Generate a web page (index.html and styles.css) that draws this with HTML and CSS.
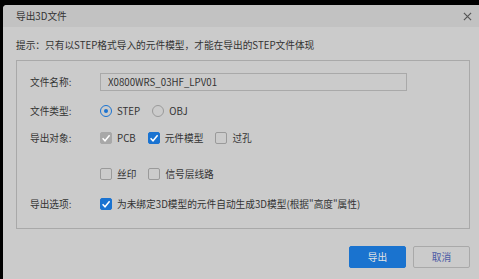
FILE: index.html
```html
<!DOCTYPE html>
<html lang="zh">
<head>
<meta charset="utf-8">
<link rel="stylesheet" href="styles.css">
</head>
<body>
<div class="dialog">
  <div class="titlebar">
    <span class="title">导出3D文件</span>
    <svg class="close" width="10" height="10" viewBox="0 0 10 10"><path d="M1 1 L9 9 M9 1 L1 9" stroke="#555" stroke-width="1.3" fill="none"/></svg>
  </div>
  <div class="hint">提示：只有以STEP格式导入的元件模型，才能在导出的STEP文件体现</div>
  <div class="box">
    <div class="row">
      <div class="label">文件名称:</div>
      <div class="input">X0800WRS_03HF_LPV01</div>
    </div>
    <div class="row r2">
      <div class="label">文件类型:</div>
      <div class="controls">
        <span class="item"><span class="radio on"></span>STEP</span>
        <span class="item"><span class="radio"></span>OBJ</span>
      </div>
    </div>
    <div class="row r3">
      <div class="label">导出对象:</div>
      <div class="controls">
        <span class="item"><span class="cb dis"><svg viewBox="0 0 12 12"><path d="M2.6 6.3 L5 8.8 L9.6 3.2" stroke="#fff" stroke-width="1.5" fill="none"/></svg></span>PCB</span>
        <span class="item"><span class="cb on"><svg viewBox="0 0 12 12"><path d="M2.6 6.3 L5 8.8 L9.6 3.2" stroke="#fff" stroke-width="1.5" fill="none"/></svg></span>元件模型</span>
        <span class="item"><span class="cb"></span>过孔</span>
      </div>
    </div>
    <div class="row r4">
      <div class="label"></div>
      <div class="controls">
        <span class="item"><span class="cb"></span>丝印</span>
        <span class="item"><span class="cb"></span>信号层线路</span>
      </div>
    </div>
    <div class="row r5">
      <div class="label">导出选项:</div>
      <div class="controls">
        <span class="item"><span class="cb on"><svg viewBox="0 0 12 12"><path d="M2.6 6.3 L5 8.8 L9.6 3.2" stroke="#fff" stroke-width="1.5" fill="none"/></svg></span>为未绑定3D模型的元件自动生成3D模型(根据"高度"属性)</span>
      </div>
    </div>
  </div>
  <div class="actions">
    <button class="btn primary">导出</button>
    <button class="btn">取消</button>
  </div>
</div>
</body>
</html>
```
FILE: styles.css
```css
html, body {
  margin: 0;
  padding: 0;
  background: #000;
}
body {
  padding: 5px 0 0 3px;
  height: 279px;
  box-sizing: border-box;
  overflow: hidden;
  font-family: "Noto Sans CJK SC", "Liberation Sans", sans-serif;
  font-size: 9.7px;
  color: #333;
}
.dialog {
  background: #cbcbcb;
  height: 274px;
  border-top-left-radius: 4px;
  overflow: hidden;
}
.titlebar {
  height: 22px;
  background: #c2c2c2;
  display: flex;
  align-items: center;
  justify-content: space-between;
  padding: 0 7px 0 13px;
}
.title {
  line-height: 22px;
  color: #333;
}
.close {
  width: 9px;
  height: 9px;
}
.hint {
  margin: 9px 0 0 13px;
  line-height: 18px;
  color: #333;
}
.box {
  margin: 6px 9px 0 13px;
  border: 1px solid #a9a9a9;
  padding: 12px 0 15px 13px;
}
.row {
  display: flex;
  align-items: flex-start;
  height: 18px;
}
.r2 { margin-top: 11px; }
.r3 { margin-top: 9px; }
.r4 { margin-top: 18px; }
.r5 { margin-top: 12px; }
.label {
  width: 70px;
  line-height: 18px;
  flex: none;
}
.input {
  width: 307px;
  height: 18px;
  box-sizing: border-box;
  border: 1px solid #a9a9a9;
  padding-left: 7px;
  line-height: 16px;
  color: #333;
}
.controls {
  display: flex;
  align-items: center;
  height: 18px;
  gap: 12px;
}
.item {
  display: flex;
  align-items: center;
  gap: 5px;
  line-height: 18px;
}
.radio {
  width: 12px;
  height: 12px;
  box-sizing: border-box;
  border: 1px solid #9a9a9a;
  border-radius: 50%;
  position: relative;
}
.radio.on {
  border-color: #1a73d1;
}
.radio.on::after {
  content: "";
  position: absolute;
  left: 3px;
  top: 3px;
  width: 4px;
  height: 4px;
  border-radius: 50%;
  background: #1a73d1;
}
.cb {
  width: 12px;
  height: 12px;
  box-sizing: border-box;
  border: 1px solid #9a9a9a;
  border-radius: 2px;
  display: flex;
}
.cb svg {
  width: 12px;
  height: 12px;
  margin: -1px;
}
.cb.on {
  background: #1a73d1;
  border-color: #1a73d1;
}
.cb.dis {
  background: #a8a8a8;
  border-color: #a8a8a8;
}
.actions {
  display: flex;
  justify-content: flex-end;
  gap: 7px;
  margin: 17px 9px 0 0;
}
.btn {
  width: 57px;
  height: 22px;
  font-family: inherit;
  font-size: 9.7px;
  border: 1px solid #a9a9a9;
  background: #cbcbcb;
  color: #4a5aa5;
  border-radius: 2px;
  padding: 0;
}
.btn.primary {
  background: #1a73cf;
  border-color: #1a73cf;
  color: #e4e4e4;
}
```
